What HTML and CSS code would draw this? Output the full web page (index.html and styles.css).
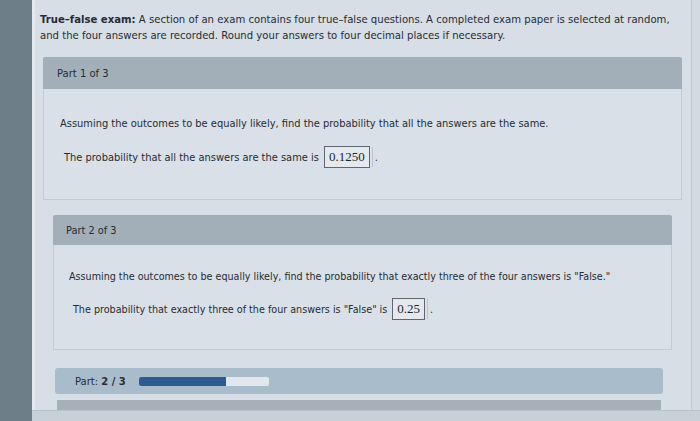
FILE: index.html
```html
<!DOCTYPE html>
<html>
<head>
<meta charset="utf-8">
<link rel="stylesheet" href="styles.css">
</head>
<body>
<div class="screen">
  <div class="strip"></div>
  <div class="main">
    <div class="row">
      <div class="page">
        <p class="intro"><b>True–false exam:</b> A section of an exam contains four true–false questions. A completed exam paper is selected at random, and the four answers are recorded. Round your answers to four decimal places if necessary.</p>
        <section class="part part-one">
          <div class="part-head">Part 1 of 3</div>
          <div class="part-body">
            <p class="question">Assuming the outcomes to be equally likely, find the probability that all the answers are the same.</p>
            <p class="answer">The probability that all the answers are the same is <span class="ans-box">0.1250</span><span class="dot">.</span></p>
          </div>
        </section>
        <section class="part part-two">
          <div class="part-head">Part 2 of 3</div>
          <div class="part-body">
            <p class="question">Assuming the outcomes to be equally likely, find the probability that exactly three of the four answers is "False."</p>
            <p class="answer">The probability that exactly three of the four answers is "False" is <span class="ans-box">0.25</span><span class="dot">.</span></p>
          </div>
        </section>
        <div class="progress">
          <span class="prog-label">Part: <b>2 / 3</b></span>
          <div class="bar"><div class="fill" style="width:67%"></div></div>
        </div>
        <div class="band"></div>
      </div>
      <div class="side"></div>
    </div>
    <div class="bottom"></div>
  </div>
</div>
</body>
</html>
```
FILE: styles.css
```css
html, body {
  margin: 0;
  padding: 0;
  background: #d3dbe3;
}
body {
  width: 700px;
  height: 421px;
  overflow: hidden;
  font-family: "DejaVu Sans", Verdana, sans-serif;
  color: #262c33;
}
.screen {
  display: flex;
  height: 421px;
}
.strip {
  width: 32px;
  flex: none;
  background: #6e7e88;
}
.main {
  flex: 1;
  display: flex;
  flex-direction: column;
}
.row {
  display: flex;
  height: 410px;
}
.page {
  width: 660px;
  flex: none;
  border-left: 3px solid #e4e9ee;
  border-right: 1px solid #c2cbd3;
  background: #d7dee6;
  padding-top: 12px;
  box-sizing: border-box;
}
.side {
  flex: 1;
  background: #d2dae2;
}
.intro {
  margin: 0 0 13px 5px;
  font-size: 10.1px;
  line-height: 16px;
}
.part {
  background: #d9e0e7;
}
.part-one {
  margin: 0 9px 15px 8px;
}
.part-two {
  margin: 0 19px 18px 18px;
}
.part-head {
  background: #a2afb8;
  height: 32px;
  line-height: 34px;
  padding-left: 14px;
  font-size: 10px;
  border-radius: 2px 2px 0 0;
}
.part-two .part-head {
  height: 30px;
  line-height: 31px;
  padding-left: 13px;
  font-size: 9.8px;
}
.part-body {
  border: 1px solid #c3ccd4;
  border-top: none;
}
.part-one .part-body {
  padding: 27px 0 31px 16px;
  font-size: 9.9px;
}
.part-two .part-body {
  padding: 24px 0 29px 15px;
  font-size: 9.6px;
}
.question {
  margin: 0 0 14px 0;
  line-height: 16px;
}
.part-two .question {
  margin-bottom: 13px;
}
.answer {
  margin: 0 0 0 4px;
  height: 22px;
  display: flex;
  align-items: center;
}
.ans-box {
  display: inline-flex;
  align-items: center;
  height: 20px;
  margin-left: 5px;
  padding: 0 4px;
  border: 1px solid #5e676f;
  background: #e4e9ee;
  font-family: "Liberation Serif", "Times New Roman", serif;
  font-size: 13px;
  color: #1f252b;
}
.dot {
  margin-left: 2px;
  padding-left: 2px;
  border-left: 1px solid #bcc5cd;
  height: 20px;
  display: inline-flex;
  align-items: center;
}
.progress {
  margin: 0 28px 0 20px;
  height: 26px;
  background: #a9bccc;
  border-radius: 3px;
  display: flex;
  align-items: center;
  padding-left: 20px;
  font-size: 10px;
}
.bar {
  margin-left: 13px;
  width: 130px;
  height: 9px;
  background: #e1e7ed;
  border-radius: 2px;
  overflow: hidden;
}
.fill {
  height: 100%;
  background: #2d5b90;
}
.band {
  margin: 6px 30px 0 22px;
  height: 10px;
  background: #a5b0b8;
}
.bottom {
  height: 11px;
  background: #c8d0d8;
  border-top: 1px solid #b9c2ca;
}
```
